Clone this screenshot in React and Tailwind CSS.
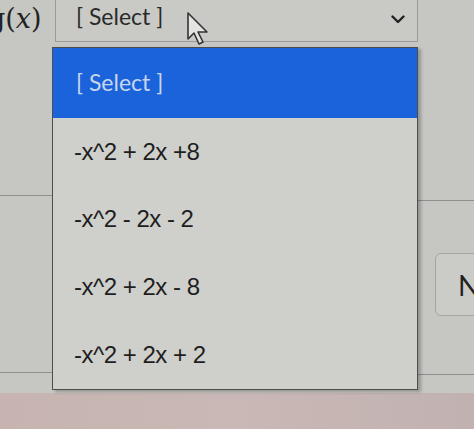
import React from "react";

const items = ["-x^2 + 2x +8", "-x^2 - 2x - 2", "-x^2 + 2x - 8", "-x^2 + 2x + 2"];

export default function App() {
  return (
    <div className="relative w-[474px] h-[429px] overflow-hidden bg-[#c6c7c3] flex flex-col">
      {/* header row */}
      <div className="flex h-[42px] shrink-0">
        <div className="w-[55px] flex items-center pb-[6px] overflow-hidden">
          <span className="ml-[-12px] text-[27px] text-[#222] leading-none whitespace-nowrap" style={{ fontFamily: '"DejaVu Serif", "Liberation Serif", serif' }}>
            g(<i>x</i>)
          </span>
        </div>
        <div className="w-[363px] border-l border-r border-b border-[#9a9a98] bg-[#c9cac6] flex items-center justify-between pl-[20px] pr-[12px] pb-[8px]">
          <span className="text-[23px] text-[#2a2a2a] leading-none" style={{ fontFamily: 'Lato, "Liberation Sans", sans-serif' }}>[ Select ]</span>
          <svg width="14" height="9" viewBox="0 0 14 9" className="mt-[6px]">
            <path d="M1.5 1.5 L7 7 L12.5 1.5" fill="none" stroke="#222" strokeWidth="2.4" strokeLinecap="round" strokeLinejoin="round" />
          </svg>
        </div>
        <div className="flex-1" />
      </div>

      {/* body */}
      <div className="flex flex-1">
        <div className="w-[52px] flex flex-col">
          <div className="h-[154px] border-b border-[#8f8f8d]" />
          <div className="h-[177px] border-b border-[#8f8f8d]" />
        </div>
        <div className="flex-1" />
        <div className="w-[56px] flex flex-col">
          <div className="h-[159px] border-b border-[#8f8f8d]" />
          <div className="h-[52px]" />
          <div className="ml-[17px] w-[60px] h-[63px] rounded-[6px] border border-[#a5a5a2] bg-[#cbccc8] flex items-center pl-[22px]">
            <span className="text-[28px] text-[#222] leading-none" style={{ fontFamily: 'Lato, "Liberation Sans", sans-serif' }}>N</span>
          </div>
          <div className="h-[59px] border-b border-[#8f8f8d]" />
        </div>
      </div>

      {/* bezel band */}
      <div className="h-[36px] shrink-0 bg-gradient-to-r from-[#c7b4b1] via-[#c9b8b5] to-[#c1b1b0]" />

      {/* dropdown list */}
      <div className="absolute top-[47px] left-[52px] w-[366px] h-[343px] border border-[#4d4d4d] bg-[#cfd0cc] shadow-[3px_2px_3px_rgba(0,0,0,0.25)] flex flex-col">
        <div className="h-[70px] bg-[#1b63db] flex items-center pl-[23px]">
          <span className="text-[23px] text-[#c7d6ee] leading-none" style={{ fontFamily: 'Lato, "Liberation Sans", sans-serif' }}>[ Select ]</span>
        </div>
        {items.map((t) => (
          <div key={t} className="h-[68px] flex items-center pl-[21px]">
            <span className="text-[24px] text-[#1e1e1e] leading-none tracking-[-0.5px]" style={{ fontFamily: '"Liberation Sans", Arial, sans-serif' }}>{t}</span>
          </div>
        ))}
      </div>

      {/* mouse cursor */}
      <svg className="absolute left-[186px] top-[11px]" width="28" height="36" viewBox="0 0 28 36">
        <path d="M2 2 L2 28 L8 22 L13 33 L17 31 L12 21 L21 21 Z" fill="#e4e4e2" stroke="#333" strokeWidth="1.6" strokeLinejoin="round" />
      </svg>
    </div>
  );
}
